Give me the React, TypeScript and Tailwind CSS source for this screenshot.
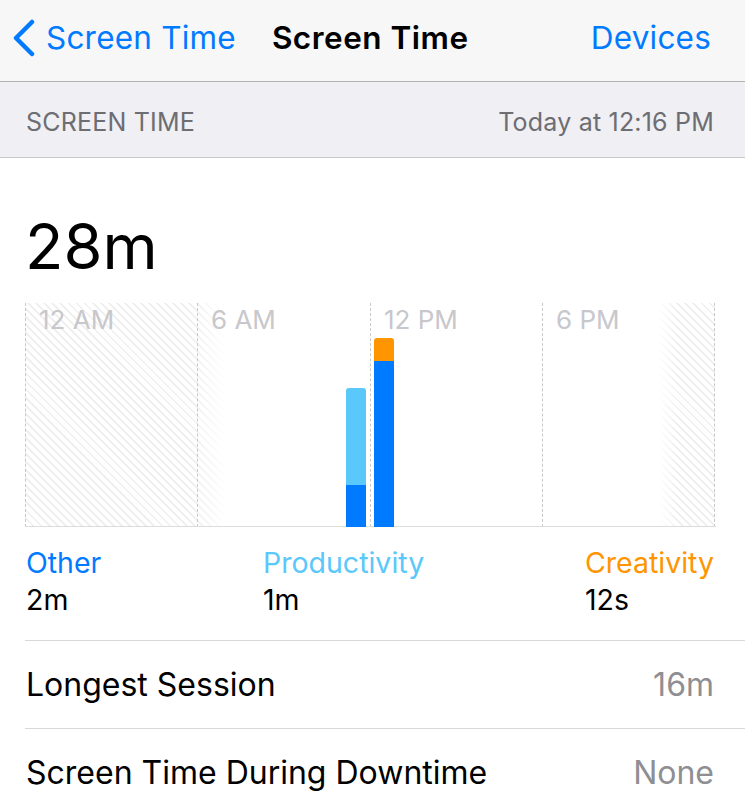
const font = { fontFamily: 'Inter, "Liberation Sans", sans-serif' };

const hatch =
  'bg-[repeating-linear-gradient(45deg,#f0f0f0_0px,#f0f0f0_2px,transparent_2px,transparent_5.7px)]';

function BackChevron() {
  return (
    <svg width="26" height="38" viewBox="0 0 26 38" className="shrink-0">
      <path
        d="M21 3 L5 19 L21 35"
        fill="none"
        stroke="#007aff"
        strokeWidth="4.5"
        strokeLinecap="round"
        strokeLinejoin="round"
      />
    </svg>
  );
}

function Chart() {
  const grid = [0, 172, 345, 517, 689];
  const labels = [
    { text: '12 AM', left: 14 },
    { text: '6 AM', left: 186 },
    { text: '12 PM', left: 359 },
    { text: '6 PM', left: 531 },
  ];
  return (
    <div className="relative ml-[25px] h-[224px] w-[691px]">
      <div className={`absolute top-0 bottom-0 left-0 w-[201px] ${hatch}`}>
        <div className="absolute top-0 right-0 bottom-0 w-[36px] bg-[linear-gradient(to_right,rgba(255,255,255,0),#fff)]" />
      </div>
      <div className={`absolute top-0 bottom-0 left-[633px] w-[57px] ${hatch}`}>
        <div className="absolute top-0 bottom-0 left-0 w-[20px] bg-[linear-gradient(to_left,rgba(255,255,255,0),#fff)]" />
      </div>
      {grid.map((x) => (
        <div
          key={x}
          className="absolute top-0 bottom-0 border-l border-dashed border-[#c8c8c8]"
          style={{ left: x }}
        />
      ))}
      <div className="absolute right-0 bottom-0 left-0 h-px bg-[#dcdcdc]" />
      {labels.map((l) => (
        <span
          key={l.text}
          className="absolute top-[1px] text-[26px] leading-[32px] text-[#c7c7cc]"
          style={{ left: l.left }}
        >
          {l.text}
        </span>
      ))}
      <div className="absolute bottom-0 left-[321px] flex h-[139px] w-[20px] flex-col overflow-hidden rounded-t-[3px]">
        <div className="flex-1 bg-[#5ac8fa]" />
        <div className="h-[42px] bg-[#007aff]" />
      </div>
      <div className="absolute bottom-0 left-[349px] flex h-[189px] w-[20px] flex-col overflow-hidden rounded-t-[3px]">
        <div className="h-[23px] bg-[#ff9500]" />
        <div className="flex-1 bg-[#007aff]" />
      </div>
    </div>
  );
}

function Row({ label, value }: { label: string; value: string }) {
  return (
    <div className="flex h-[88px] items-center justify-between border-t border-[#d8d8dc] pr-[31px] pl-[1px]">
      <span className="text-[32px] text-black">{label}</span>
      <span className="text-[32px] text-[#8e8e93]">{value}</span>
    </div>
  );
}

export default function App() {
  return (
    <div className="h-[808px] w-[745px] overflow-hidden bg-white" style={font}>
      <header className="flex h-[82px] items-center border-b border-[#b2b2b2] bg-[#f7f7f7] pr-[34px] pb-[5px] pl-[11px]">
        <BackChevron />
        <span className="ml-[9px] text-[31.5px] tracking-[0.2px] text-[#007aff]">Screen Time</span>
        <span className="ml-[36px] text-[31.5px] font-semibold tracking-[0.5px] text-black">
          Screen Time
        </span>
        <span className="ml-auto text-[31.5px] tracking-[0.2px] text-[#007aff]">Devices</span>
      </header>

      <div className="flex h-[76px] items-center justify-between border-b border-[#c8c7cc] bg-[#efeff4] pt-[6px] pr-[31px] pl-[26px]">
        <span className="text-[25px] tracking-[0.2px] text-[#6d6d72]">SCREEN TIME</span>
        <span className="text-[25px] tracking-[0.2px] text-[#6d6d72]">Today at 12:16 PM</span>
      </div>

      <div className="h-[145px] pt-[57px] pl-[25px]">
        <div className="text-[63px] leading-none text-black">28m</div>
      </div>

      <Chart />

      <div className="mt-[17px] mb-[22px] flex px-[26px] text-[28.5px] leading-[37px]">
        <div className="w-[237px]">
          <div className="text-[#007aff]">Other</div>
          <div className="text-black">2m</div>
        </div>
        <div className="w-[322px]">
          <div className="text-[#5ac8fa]">Productivity</div>
          <div className="text-black">1m</div>
        </div>
        <div>
          <div className="text-[#ff9500]">Creativity</div>
          <div className="text-black">12s</div>
        </div>
      </div>

      <div className="pl-[25px]">
        <Row label="Longest Session" value="16m" />
        <Row label="Screen Time During Downtime" value="None" />
      </div>
    </div>
  );
}
